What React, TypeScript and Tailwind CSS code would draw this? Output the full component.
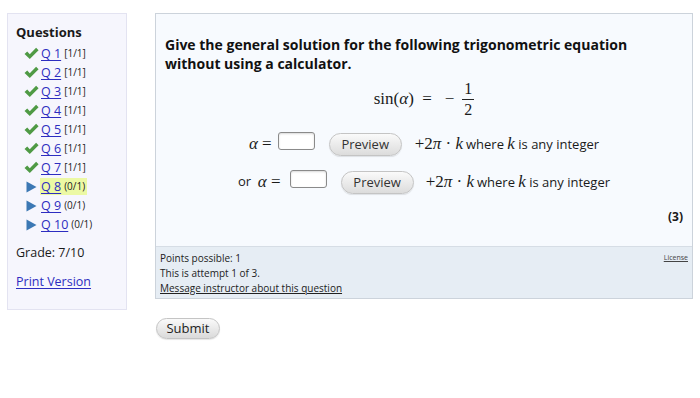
import React from 'react';

const questions = [
  { n: 1, done: true, score: '[1/1]' },
  { n: 2, done: true, score: '[1/1]' },
  { n: 3, done: true, score: '[1/1]' },
  { n: 4, done: true, score: '[1/1]' },
  { n: 5, done: true, score: '[1/1]' },
  { n: 6, done: true, score: '[1/1]' },
  { n: 7, done: true, score: '[1/1]' },
  { n: 8, done: false, score: '(0/1)', current: true },
  { n: 9, done: false, score: '(0/1)' },
  { n: 10, done: false, score: '(0/1)' },
];

const Check = () => (
  <svg width="15" height="13" viewBox="0 0 14 12" className="shrink-0">
    <path d="M0.5 6.5 L3 4.2 L5.4 6.6 L11.3 0.6 L13.6 2.9 L5.4 11.2 Z" fill="#4f9a45" />
  </svg>
);

const Arrow = () => (
  <svg width="11" height="12" viewBox="0 0 11 12" className="shrink-0">
    <path d="M0.5 0.5 L10.5 6 L0.5 11.5 Z" fill="#3c78b4" />
  </svg>
);

const Math = ({ children }: { children: React.ReactNode }) => (
  <span className="font-['Liberation_Serif',serif] text-[17px]">{children}</span>
);

const AnswerBox = () => (
  <span className="inline-block w-[37px] h-[18px] border border-[#8a8a8a] rounded-[3px] bg-white shadow-[inset_0_1px_2px_rgba(0,0,0,0.15)]" />
);

const PreviewButton = () => (
  <button className="h-[23px] w-[73px] rounded-full border border-[#c4c4c4] bg-gradient-to-b from-[#fafafa] to-[#dcdcdc] text-[13px] text-[#333] leading-none shadow-[0_1px_1px_rgba(0,0,0,0.1)]">
    Preview
  </button>
);

const App: React.FC = () => {
  return (
    <div className="w-[700px] h-[398px] bg-white font-['Open_Sans',sans-serif] text-[#1a1a1a] flex items-start">
      {/* sidebar */}
      <div className="w-[120px] h-[297px] ml-[7px] mt-[13px] border border-[#e3e3f1] bg-[#f6f6fd] pl-[8px] pt-[9px] shrink-0">
        <div className="text-[13px] font-bold leading-[18px]">Questions</div>
        <ul className="mt-[3px]">
          {questions.map((q) => (
            <li key={q.n} className="h-[19px] flex items-center pl-[8px] text-[12.5px]">
              {q.done ? <Check /> : <span className="ml-[2px] mr-[2px] flex"><Arrow /></span>}
              <span className={`flex items-center ml-[1px] pl-[1px] pr-[2px] ${q.current ? 'bg-[#ecf9a4]' : ''}`}>
                <a className="text-[#2d2dc0] underline underline-offset-2 leading-[17px]">Q {q.n}</a>
                <span className="ml-[3px] text-[10px] text-[#222]">{q.score}</span>
              </span>
            </li>
          ))}
        </ul>
        <div className="mt-[10px] text-[12.5px] leading-[18px]">Grade: 7/10</div>
        <div className="mt-[11px] text-[12.5px] leading-[18px]">
          <a className="text-[#2d2dc0] underline underline-offset-2">Print Version</a>
        </div>
      </div>

      {/* main */}
      <div className="ml-[28px] mt-[13px] w-[538px]">
        <div className="border border-[#ccd3db] bg-[#f7fafe]">
          <div className="h-[232px] px-[9px] pt-[22px] relative">
            <p className="text-[14px] font-bold leading-[18.5px] text-[#111]">
              Give the general solution for the following trigonometric equation
              <br />
              without using a calculator.
            </p>
            <div className="mt-[9px] flex justify-center items-center h-[34px]">
              <Math>
                sin(<i>α</i>)&nbsp;&nbsp;=&nbsp;&nbsp;&nbsp;−
              </Math>
              <span className="ml-[8px] inline-flex flex-col items-center font-['Liberation_Serif',serif] text-[16px] leading-[20px]">
                <span>1</span>
                <span className="w-[12px] border-t border-[#222]" />
                <span>2</span>
              </span>
            </div>
            <div className="mt-[16px] flex justify-center items-center h-[24px] text-[13px]">
              <Math><i>α</i>&nbsp;=</Math>
              <span className="ml-[6px]"><AnswerBox /></span>
              <span className="ml-[14px]"><PreviewButton /></span>
              <span className="ml-[13px]"><Math>+2<i>π</i>&nbsp;·&nbsp;<i>k</i></Math></span>
              <span className="ml-[3px]">where <Math><i>k</i></Math> is any integer</span>
            </div>
            <div className="mt-[14px] flex justify-center items-center h-[24px] text-[13px]">
              <span>or&nbsp;&nbsp;</span>
              <Math><i>α</i>&nbsp;=</Math>
              <span className="ml-[9px]"><AnswerBox /></span>
              <span className="ml-[14px]"><PreviewButton /></span>
              <span className="ml-[12px]"><Math>+2<i>π</i>&nbsp;·&nbsp;<i>k</i></Math></span>
              <span className="ml-[3px]">where <Math><i>k</i></Math> is any integer</span>
            </div>
            <div className="mt-[14px] text-right text-[12px] font-bold">(3)</div>
          </div>
          <div className="h-[52px] border-t border-[#d6dde5] bg-[#e6edf4] px-[4px] pt-[4px] relative text-[10px] leading-[15px] text-[#222]">
            <div>Points possible: 1</div>
            <div>This is attempt 1 of 3.</div>
            <a className="underline">Message instructor about this question</a>
            <a className="absolute right-[4px] top-[3px] text-[7px] underline text-[#444]">License</a>
          </div>
        </div>
        <button className="mt-[19px] ml-[1px] h-[21px] w-[64px] rounded-full border border-[#c4c4c4] bg-gradient-to-b from-[#fafafa] to-[#dadada] text-[13px] text-[#222] leading-none shadow-[0_1px_1px_rgba(0,0,0,0.1)]">
          Submit
        </button>
      </div>
    </div>
  );
};

export default App;
